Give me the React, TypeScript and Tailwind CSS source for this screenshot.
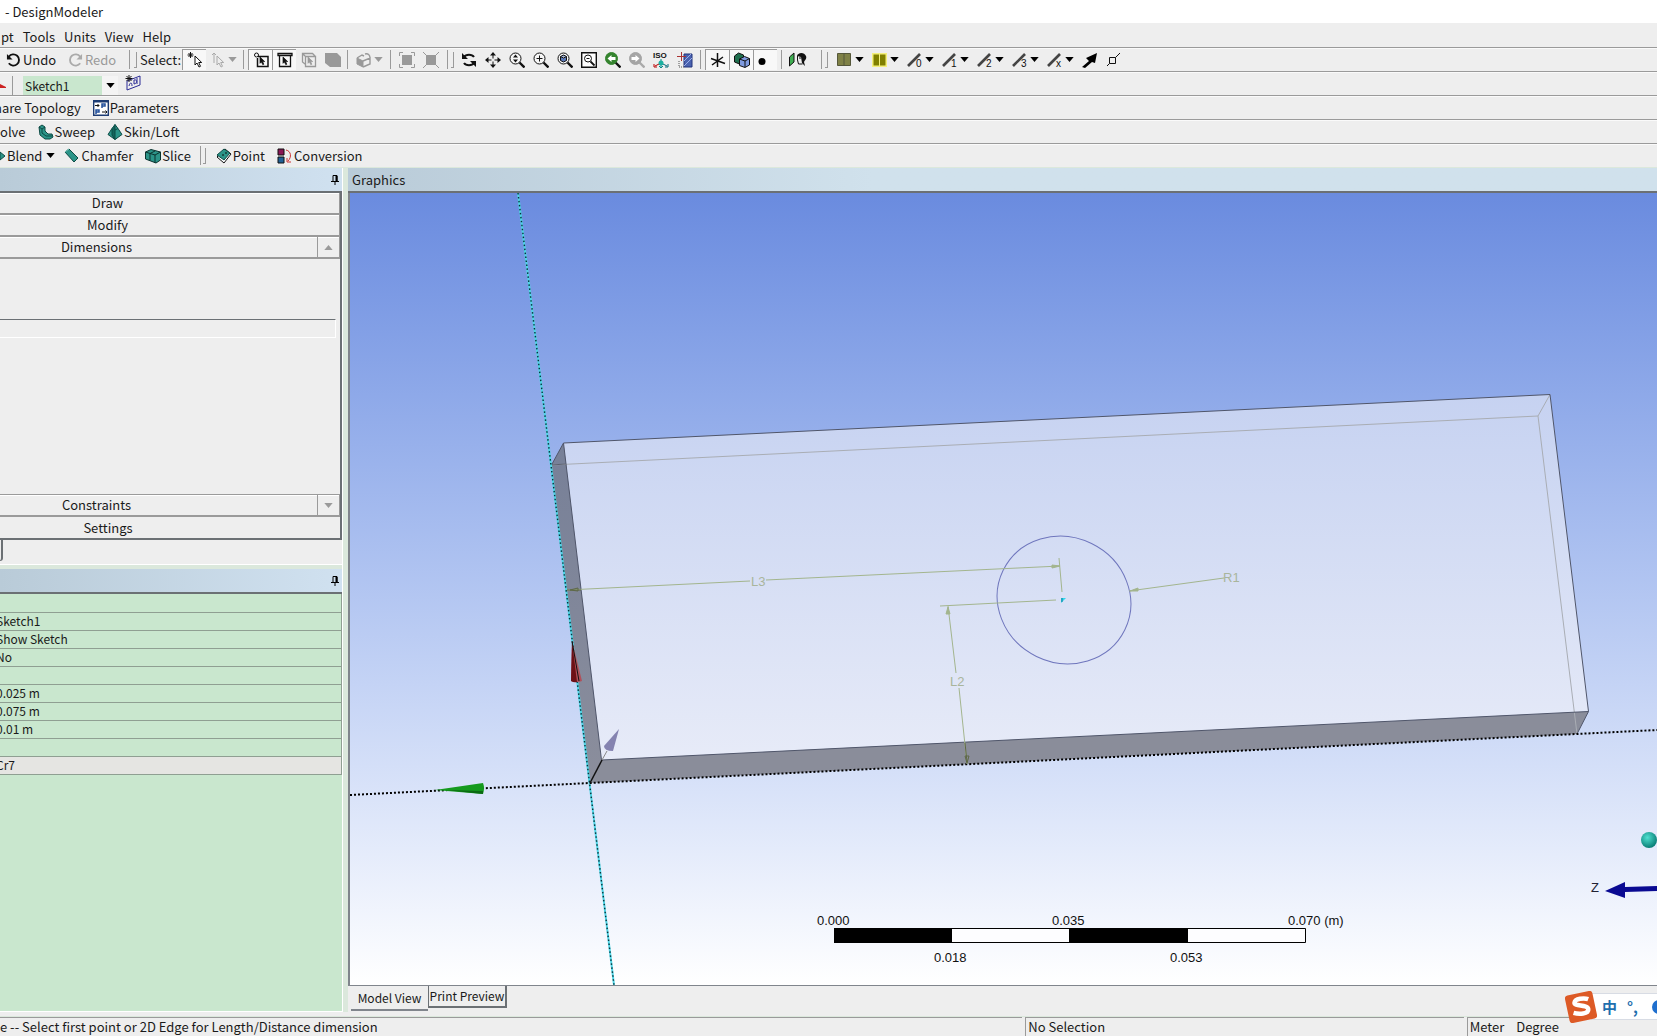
import type { ReactNode } from "react";

const sep = "h-[19px] w-px shrink-0 bg-[#9a9a9a]";

function Caret({ muted = false }: { muted?: boolean }) {
  return (
    <svg viewBox="0 0 10 6" className="h-[5px] w-[9px] shrink-0">
      <path d="M0 0h10L5 6z" fill={muted ? "#9a9a9a" : "#000"} />
    </svg>
  );
}

function Icon({ children, className = "size-4" }: { children: ReactNode; className?: string }) {
  return (
    <svg viewBox="0 0 16 16" fill="none" stroke="#111" className={`shrink-0 ${className}`}>
      {children}
    </svg>
  );
}

function Tool({
  label,
  children,
  pressed = false,
}: {
  label: string;
  children: ReactNode;
  pressed?: boolean;
}) {
  return (
    <button
      type="button"
      aria-label={label}
      className={`flex h-[21px] w-6 shrink-0 items-center justify-center border-l border-t ${
        pressed ? "border-[#9a9a9a] bg-[#f8f8f8]" : "border-transparent"
      }`}
    >
      {children}
    </button>
  );
}

function DropTool({ label, children, muted }: { label: string; children: ReactNode; muted?: boolean }) {
  return (
    <button
      type="button"
      aria-label={label}
      className={`flex h-[21px] shrink-0 items-center gap-[2px] ${muted ? "w-[30px]" : "w-[35px]"}`}
    >
      {children}
      <Caret muted={muted} />
    </button>
  );
}

function Row({ children, low = false }: { children: ReactNode; low?: boolean }) {
  return (
    <div
      className={`flex h-6 shrink-0 overflow-hidden whitespace-nowrap border-t border-[#9a9a9a] shadow-[inset_0_1px_0_#fafafa] ${
        low ? "items-end" : "items-center"
      }`}
    >
      {children}
    </div>
  );
}

function TextTool({ icon, children }: { icon?: ReactNode; children: ReactNode }) {
  return (
    <button type="button" className="flex shrink-0 items-center gap-px">
      {icon}
      {children}
    </button>
  );
}

const cursor = "M0 0v9l2-2 2 4 1.500-.7L3.700 6.500h3z";

function Magnifier({ glyph }: { glyph?: ReactNode }) {
  return (
    <Icon>
      <circle cx="6.500" cy="6.500" r="5.500" fill="#f6f6f6" />
      <path d="M10.500 10.500l5 5" strokeWidth="2.400" />
      {glyph}
    </Icon>
  );
}

function MainToolbar() {
  return (
    <Row>
      <button type="button" className="ml-[6px] flex w-[49px] shrink-0 items-center gap-[2px]">
        <Icon className="size-[15px]">
          <path d="M3 5a6 6 0 1 1 0 7" strokeWidth="2" />
          <path d="M1 2v6h6z" fill="#111" stroke="none" />
        </Icon>
        Undo
      </button>
      <button type="button" disabled className="ml-[13px] flex w-12 shrink-0 items-center gap-[2px] text-[#9a9a9a]">
        <Icon className="size-[15px]">
          <path d="M13 5a6 6 0 1 0 0 7" stroke="#aaa" strokeWidth="2" />
          <path d="M15 2v6H9z" fill="#aaa" stroke="none" />
        </Icon>
        Redo
      </button>
      <div className={`${sep} ml-[13px]`} />
      <div className="ml-1 h-4 w-[3px] border-b border-r border-[#9a9a9a]" />
      <span className="ml-[3px] w-[42px]">Select:</span>
      <Tool label="New selection" pressed>
        <Icon>
          <path d="M3.500 0v6M.500 3h6M1.500 1l4 4M5.500 1l-4 4" />
          <path d={cursor} transform="translate(8 4)" fill="#fff" />
        </Icon>
      </Tool>
      <div className="ml-1">
        <DropTool label="Select mode" muted>
          <Icon>
            <path d="M4 1v10M2 3l2-2 2 2" stroke="#aaa" />
            <path d={cursor} transform="translate(7 4)" stroke="#aaa" />
          </Icon>
        </DropTool>
      </div>
      <div className={`${sep} ml-[3px]`} />
      <div className="ml-1 flex">
        <Tool label="Point filter" pressed>
          <Icon>
            <path d="M5 4.500h10v10H4.500V6" strokeWidth="1.500" />
            <circle cx="3.500" cy="3" r="2" />
            <path d={cursor} transform="translate(7 5) scale(.7)" fill="#111" />
          </Icon>
        </Tool>
        <Tool label="Edge filter" pressed>
          <Icon>
            <path d="M1 1.500h14v2H1zM2.500 4v10.500h11V4" strokeWidth="1.300" />
            <path d={cursor} transform="translate(6 5) scale(.7)" fill="#111" />
          </Icon>
        </Tool>
        <Tool label="Face filter">
          <Icon>
            <path d="M4.500 4.500h10v10h-10zM4 12L1.500 10V1.500h10L14 4M1.500 1.500l3 3" stroke="#999" strokeWidth="1.300" />
            <path d={cursor} transform="translate(7 5) scale(.7)" fill="#999" stroke="#999" />
          </Icon>
        </Tool>
        <Tool label="Body filter">
          <Icon>
            <path d="M0 1h12l4 4v10H5l-5-4z" fill="#999" stroke="none" />
          </Icon>
        </Tool>
      </div>
      <div className={`${sep} ml-[3px]`} />
      <div className="ml-2">
        <DropTool label="Extend selection" muted>
          <Icon>
            <path d="M1 6l6 3v6l-6-3z" fill="#999" stroke="#999" />
            <path d="M7 9l7-3v6l-7 3M1 6l5-3 2 1M9 2c3-1 5 1 5 4" stroke="#999" strokeWidth="1.400" />
          </Icon>
        </DropTool>
      </div>
      <div className={`${sep} ml-[4px]`} />
      <div className="ml-[3px] flex">
        <Tool label="Expand">
          <Icon>
            <path d="M3 3h10v10H3z" fill="#999" stroke="none" />
            <path d="M.500 4V.500H4M12 .500h3.500V4M.500 12v3.500H4M12 15.500h3.500V12" stroke="#999" />
          </Icon>
        </Tool>
        <Tool label="Shrink">
          <Icon>
            <path d="M3 3h10v10H3z" fill="#999" stroke="none" />
            <path d="M0 0l16 16M16 0L0 16" stroke="#999" />
          </Icon>
        </Tool>
      </div>
      <div className={`${sep} ml-[5px]`} />
      <div className="ml-[3px] h-4 w-[3px] border-b border-r border-[#9a9a9a]" />
      <div className="ml-[2px] flex">
        <Tool label="Rotate">
          <Icon>
            <path d="M3 5c2-3 8-3 10 0M13 11c-2 3-8 3-10 0" strokeWidth="2" />
            <path d="M1 1v6h6zM15 15V9H9z" fill="#111" stroke="none" />
          </Icon>
        </Tool>
        <Tool label="Pan">
          <Icon>
            <path d="M8 2v12M2 8h12" strokeDasharray="4.500 3" />
            <path d="M8 0l3 3.500H5zM8 16l3-3.500H5zM0 8l3.500-3v6zM16 8l-3.500-3v6z" fill="#111" stroke="none" />
          </Icon>
        </Tool>
        <Tool label="Zoom">
          <Magnifier glyph={<path d="M6.500 2.500L9 5.500H4zM6.500 10.500L9 7.500H4z" fill="#111" stroke="none" />} />
        </Tool>
        <Tool label="Zoom in">
          <Magnifier glyph={<path d="M6.500 3.500v6M3.500 6.500h6" />} />
        </Tool>
        <Tool label="Zoom to fit">
          <Magnifier
            glyph={<path d="M3.500 4.500l3-1.500 3 1.500v4l-3 1.500-3-1.500zM3.500 4.500l3 1.500 3-1.500" fill="#5a78b8" />}
          />
        </Tool>
        <Tool label="Box zoom">
          <Icon>
            <path d="M.700.700h14.600v14.600H.700z" fill="#fff" strokeWidth="1.400" />
            <circle cx="7" cy="6.500" r="3.500" />
            <path d="M9.500 9.500l4 4" strokeWidth="1.800" />
            <path d="M5.500 6.500h3" />
          </Icon>
        </Tool>
        <Tool label="Previous view">
          <Icon>
            <path d="M10.500 10.500l5 5" strokeWidth="2.400" />
            <circle cx="6.500" cy="6.500" r="6" fill="#35842f" stroke="#35842f" />
            <path d="M2.500 6.500l4-3.500v2h4v3h-4v2z" fill="#fff" stroke="none" />
          </Icon>
        </Tool>
        <Tool label="Next view">
          <Icon>
            <path d="M10.500 10.500l5 5" stroke="#aaa" strokeWidth="2.400" />
            <circle cx="6.500" cy="6.500" r="6" fill="#a5a5a5" stroke="#a5a5a5" />
            <path d="M10.500 6.500l-4-3.500v2h-4v3h4v2z" fill="#fff" stroke="none" />
          </Icon>
        </Tool>
        <Tool label="Isometric view">
          <svg viewBox="0 0 16 17" className="h-[17px] w-4 shrink-0" fill="none">
            <text x="0" y="6" fontSize="8" fill="#111" fontFamily="Liberation Sans, sans-serif" fontWeight="bold">
              ISO
            </text>
            <path d="M8 7v4M8 11v5M6 14l2 2 2-2" stroke="#088" />
            <path d="M8 11l-6 3M1 12v3h3" stroke="#b00" />
            <path d="M8 11l6 3M15 12v3h-3" stroke="#067" />
            <circle cx="8" cy="11" r="2.500" fill="#1bb0a0" />
          </svg>
        </Tool>
        <Tool label="Look at face">
          <Icon>
            <path d="M7 2h8v13H7z" fill="#4a62b0" stroke="#23347c" />
            <path d="M7 9l7-7M7 14l8-8" stroke="#9db0e8" />
            <path d="M4.500 0v9M0 4.500h9" stroke="#a33" />
            <path d="M2 9v6h5" stroke="#555" strokeDasharray="1 1" />
          </Icon>
        </Tool>
      </div>
      <div className={`${sep} ml-1`} />
      <div className="ml-1 flex">
        <Tool label="Display plane" pressed>
          <Icon>
            <path d="M7.500 1v14M1 6.500l14 5M2 13L13 5" strokeWidth="1.500" />
          </Icon>
        </Tool>
        <Tool label="Display model" pressed>
          <Icon>
            <path d="M.500 4l4-3 5 2v7l-4 2-5-2z" fill="#20704f" />
            <path d="M5.500 7l5-2.500 5 2V13l-4.500 2.500-5.500-2z" fill="#7f9be0" />
            <path d="M5.500 7l5.500 2 4.500-2.500M11 9v6" />
          </Icon>
        </Tool>
        <Tool label="Display points" pressed>
          <Icon>
            <circle cx="4" cy="9.500" r="3.500" fill="#000" stroke="none" />
          </Icon>
        </Tool>
      </div>
      <div className={`${sep} ml-1`} />
      <button type="button" aria-label="Look at" className="ml-[7px] flex h-[21px] shrink-0 items-center">
        <svg viewBox="0 0 18 16" className="h-4 w-[18px]" fill="none" stroke="#111">
          <path d="M.500 5L5 1v9L.500 14z" fill="#3fae52" />
          <path d="M8 4c0-3 7-5 9 0 1 3-1 4-2 6l1 4-3-3-1-6z" fill="#111" stroke="none" />
          <path d="M8.500 4v4l1 4h4M10 6h2" />
        </svg>
      </button>
      <div className={`${sep} ml-[14px]`} />
      <div className="ml-[3px] h-4 w-[3px] border-b border-r border-[#9a9a9a]" />
      <div className="ml-[9px] flex">
        <DropTool label="Face color">
          <Icon>
            <path d="M.500 1.500h13v12H.500zM7 1.500v12" fill="#7f8146" stroke="#55573a" />
          </Icon>
        </DropTool>
        <DropTool label="Edge color">
          <Icon>
            <path d="M0 1h15v14H0z" fill="#f4f07c" stroke="none" />
            <path d="M1.500 2.500H7v11H1.500zM8 2.500h5.500v11H8z" fill="#808000" stroke="none" />
          </Icon>
        </DropTool>
        {["0", "1", "2", "3", "x"].map((n) => (
          <DropTool key={n} label={`Edge style ${n}`}>
            <Icon>
              <path d="M1 14L13 2" stroke="#444" strokeWidth="2.600" />
              <text x="9" y="15" fontSize="10" fill="#111" stroke="none" fontFamily="Liberation Sans, sans-serif">
                {n}
              </text>
            </Icon>
          </DropTool>
        ))}
        <div className="-ml-[5px] flex">
          <Tool label="Edge direction">
            <Icon>
              <path d="M15 1l-2 10-3-1-7 6-3-1 7-6-3-3z" fill="#000" stroke="none" />
            </Icon>
          </Tool>
          <Tool label="Vertices">
            <Icon>
              <path d="M3.500 5.500h6v6h-6zM9.500 5.500L14 1M3.500 11.500L1 14" />
            </Icon>
          </Tool>
        </div>
      </div>
    </Row>
  );
}

function Toolbars() {
  return (
    <>
      <MainToolbar />
      <Row low>
        <svg viewBox="0 0 6 4" className="mb-[7px] h-1 w-[6px] shrink-0">
          <path d="M0 0l6 3v1H0z" fill="#c22" />
        </svg>
        <div className={`${sep} ml-[6px]`} />
        <select
          aria-label="Active sketch"
          className="ml-[10px] h-[19px] w-[79px] appearance-none bg-[#c9e7ce] pl-[2px] text-xs leading-[19px]"
        >
          <option>Sketch1</option>
        </select>
        <div className="flex h-[19px] w-4 items-center justify-center bg-[#f4f4f4]">
          <Caret />
        </div>
        <button type="button" aria-label="New sketch" className="mb-1 ml-[7px] flex items-center">
          <Icon>
            <path d="M2 6l13-5v9L2 15z" stroke="#2a2a96" />
            <path d="M4 11c1-4 3-4 3 0M9 5c4-1 3 4 0 4V5M12 3v6" stroke="#2a2a96" />
            <path d="M4 0v7M.500 3.500h7M1.500 1l5 5M6.500 1l-5 5" />
          </Icon>
        </button>
      </Row>
      <Row>
        <div className="-ml-[6px] flex gap-[12px]">
          <TextTool>hare Topology</TextTool>
          <TextTool
            icon={
              <Icon>
                <path d="M.700.700h14.600v14.600H.700z" fill="#fff" stroke="#1d3c74" strokeWidth="1.400" />
                <path d="M1 1.500h14" stroke="#1d3c74" strokeWidth="2" />
                <path d="M2 5.500h4M4.500 4L6 5.500 4.500 7M9 12h5M12.500 10.500L14 12l-1.500 1.500" />
                <path d="M9 8V4h3v2H9M3 14v-4h3v2H3" stroke="#23509c" strokeWidth="1.500" />
              </Icon>
            }
          >
            Parameters
          </TextTool>
        </div>
      </Row>
      <Row>
        <div className="flex gap-[12px]">
          <TextTool>olve</TextTool>
          <TextTool
            icon={
              <Icon>
                <path d="M1 3l3-2 3 2v4l3 3 4 0 1 3-3 2H7l-5-4z" fill="#2b9488" stroke="#0d4a44" />
                <path d="M1 3l3 2 3-2M4 5v4l4 3h6" stroke="#0d4a44" />
              </Icon>
            }
          >
            Sweep
          </TextTool>
          <TextTool
            icon={
              <Icon>
                <path d="M8 .500l3 4 4 6-7 5-7-5 4-6z" fill="#2b9488" stroke="#0d4a44" />
                <path d="M8 .500v15L5 11V4.500M8 6l3-1.500" fill="#13655c" stroke="#0d4a44" />
              </Icon>
            }
          >
            Skin/Loft
          </TextTool>
        </div>
      </Row>
      <Row>
        <div className="flex items-center">
          <svg viewBox="0 0 5 12" className="h-3 w-[5px]">
            <path d="M0 2l5 4-5 4z" fill="#2b9488" stroke="#0d4a44" />
          </svg>
          <button type="button" className="ml-[2px] flex items-center gap-1">
            Blend <Caret />
          </button>
          <div className="ml-[9px] flex gap-[12px]">
            <TextTool
              icon={
                <Icon>
                  <path d="M1 4l4-3 9 9-4 4z" fill="#2b9488" stroke="#0d4a44" />
                  <path d="M1 4l4-3" stroke="#7fd0c4" />
                </Icon>
              }
            >
              Chamfer
            </TextTool>
            <TextTool
              icon={
                <Icon>
                  <path d="M.500 4L6 1.500 15.500 4v8L11 15 .500 11z" fill="#2b9488" stroke="#0b332f" />
                  <path d="M.500 4L10 7l5.500-3M10 7v8M5 5.500L10 3M5 5.500v7" stroke="#0b332f" />
                </Icon>
              }
            >
              Slice
            </TextTool>
          </div>
          <div className={`${sep} ml-[9px]`} />
          <div className="ml-[2px] h-4 w-[3px] border-b border-r border-[#9a9a9a]" />
          <div className="ml-[10px] flex gap-[12px]">
            <TextTool
              icon={
                <Icon>
                  <path d="M1 9l8-8 6 5-7 9z" fill="#fff" />
                  <path d="M1 7l7-6 6 4-6 7z" fill="#2b9488" stroke="#0d4a44" />
                  <path d="M6 7h2M9 5h2" />
                </Icon>
              }
            >
              Point
            </TextTool>
            <TextTool
              icon={
                <Icon>
                  <path d="M1 1h6v6H1z" fill="#8a1554" />
                  <path d="M1 9h6v6H1z" fill="#1f5f96" />
                  <path d="M9 2c5 1 6 7 2 11M10 10v4h4" stroke="#c33" />
                </Icon>
              }
            >
              Conversion
            </TextTool>
          </div>
        </div>
      </Row>
    </>
  );
}

function PanelHeader() {
  return (
    <div className="flex h-[25px] shrink-0 items-center justify-end border-b-2 border-[#6b7074] bg-gradient-to-r from-[#b9cbd8] to-[#d0e1f0] pr-[3px]">
      <button type="button" aria-label="Pin panel">
        <svg viewBox="0 0 8 10" className="h-[10px] w-2" fill="none" stroke="#000">
          <path d="M2 6V.500h4V6M0 6.500h8M4 7v3" />
          <path d="M5.500 1v5" strokeWidth="2" />
        </svg>
      </button>
    </div>
  );
}

const bar =
  "flex h-[22px] items-center justify-center border-b-2 border-r border-[#9a9a9a] bg-[#eee] shadow-[inset_0_1px_0_#fff]";

function Toolbox() {
  return (
    <section className="flex h-[397px] shrink-0 flex-col border-b border-white bg-[#eee]">
      <PanelHeader />
      <div className="-ml-[124px] flex flex-1 flex-col border-b-2 border-r-2 border-[#6b7074]">
        <button type="button" className={bar}>Draw</button>
        <button type="button" className={bar}>Modify</button>
        <div className="flex">
          <button type="button" className={`${bar} flex-1`}>Dimensions</button>
          <button type="button" aria-label="Scroll up" className={`${bar} w-[22px]`}>
            <span className="rotate-180"><Caret muted /></span>
          </button>
        </div>
        <div className="flex-1 pt-[60px]">
          <div className="mr-1 h-[19px] border-b border-r border-t border-b-white border-r-white border-t-[#6b7074]" />
        </div>
        <div className="flex border-t border-[#9a9a9a]">
          <button type="button" className={`${bar} flex-1`}>Constraints</button>
          <button type="button" aria-label="Scroll down" className={`${bar} w-[22px]`}>
            <Caret muted />
          </button>
        </div>
        <button type="button" className="flex h-[21px] items-center justify-center">Settings</button>
      </div>
      <div className="h-6 shrink-0">
        <div className="h-[21px] w-[3px] rounded-br-sm border-b border-r-2 border-[#6b7074]" />
      </div>
    </section>
  );
}

const details = ["", "Sketch1", "Show Sketch", "No", "", "0.025 m", "0.075 m", "0.01 m", "", "Cr7"];

function Details() {
  return (
    <section className="mt-1 flex flex-1 flex-col border-b border-white bg-[#c9e7ce]">
      <PanelHeader />
      <table className="w-full table-fixed border-collapse text-xs">
        <tbody>
          {details.map((value, i) => (
            <tr key={i} className={i === details.length - 1 ? "bg-[#e5e5e2]" : ""}>
              <td className="h-[18px] border-b border-r border-[#8f9f92] p-0 leading-4">
                <span className="-ml-1 block">{value}</span>
              </td>
            </tr>
          ))}
        </tbody>
      </table>
    </section>
  );
}

function Viewport() {
  return (
    <div className="relative min-h-0 flex-1 overflow-hidden border-b border-l-2 border-[#80858c] bg-gradient-to-b from-[#6a8bdf] to-white">
      <svg
        viewBox="350 193 1307 792"
        preserveAspectRatio="xMidYMid slice"
        className="absolute inset-0 size-full"
        fill="none"
        fontFamily="Liberation Sans, Arial, sans-serif"
      >
        <defs>
          <linearGradient id="side" x1="0" y1="0" x2="0" y2="1">
            <stop offset="0" stopColor="#778098" />
            <stop offset="1" stopColor="#8b8e9c" />
          </linearGradient>
          <linearGradient id="face" x1="0" y1="0" x2="0" y2="1">
            <stop offset="0" stopColor="#c6d2f1" />
            <stop offset="1" stopColor="#e7ebf8" />
          </linearGradient>
          <radialGradient id="ball" cx=".4" cy=".35" r=".7">
            <stop offset="0" stopColor="#4fe0d0" />
            <stop offset="1" stopColor="#04776f" />
          </radialGradient>
        </defs>

        {/* solid body */}
        <path d="M563.500 443L1550 394.500 1588.500 711.500 601.500 760z" fill="url(#face)" />
        <path d="M563.500 443L551.500 465 590 783 601.500 760z" fill="url(#side)" />
        <path d="M601.500 760L590 783 1577 734 1588.500 711.500z" fill="#8a8d9a" />
        <path d="M551.500 465L1538 416 1577 734" stroke="#a9adb4" />
        <path d="M1538 416L1550 394.500" stroke="#a9adb4" />
        <path d="M551.500 465l14-1" stroke="#5a6070" />
        <path
          d="M563.500 443L1550 394.500 1588.500 711.500 601.500 760zM551.500 465L563.500 443M1588.500 711.500L1577 734"
          stroke="#50566a"
        />

        {/* axes */}
        <path d="M518 193L614 985" stroke="#4fd5e6" strokeWidth="2" />
        <path d="M518 193L614 985" stroke="#06343c" strokeWidth="1.400" strokeDasharray="1.500 2.500" />
        <path d="M350 795L590 783 1657 730" stroke="#000" strokeWidth="2" strokeDasharray="2 2" />
        <path d="M590 783l12-23" stroke="#111" strokeWidth="1.500" />
        <path d="M602 760l5-9" stroke="#888" />
        <path d="M435 790l48-7q2 5 0 11z" fill="#159a1e" />
        <path d="M445 790l38 1v3z" fill="#0b6a12" />
        <path d="M572 641l-1 40q6 2 11 0z" fill="#b0505a" />
        <path d="M572 641l-1 40q3 2 6 1z" fill="#6d1016" />
        <path d="M572 641l7 40" stroke="#111" />
        <path d="M619 729l-15 17q0 5 9 5z" fill="#8583b0" />

        {/* circle and its dimensions */}
        <ellipse rx="67.700" ry="62.800" transform="translate(1064 600) rotate(26)" stroke="#6f76bd" />
        <g stroke="#a3b58e">
          <path d="M567 590L750 581M766 580L1060 566M1059 558L1062 592" />
          <path d="M940 606L1056 600M948 606L956 673M959 688L967 764" />
          <path d="M1129 591L1224 578" />
          <path d="M948 607l-2 7h4zM1060 566l-8-1v3zM1130 591l8-3v3z" fill="#a3b58e" />
        </g>
        <path d="M965 743L967 762M965 756l2 7 2-7zM567 590l14 0M570 590l8-2v3z" stroke="#5e6846" />
        <g fill="#a9b59c" fontSize="13">
          <text x="751" y="586">L3</text>
          <text x="950" y="686">L2</text>
          <text x="1223" y="582">R1</text>
        </g>
        <path d="M1061 598h5l-5 5z" fill="#2fd6ee" />
        <path d="M1062 598v4" stroke="#157a96" />

        {/* ruler */}
        <path d="M834.500 928.500h471v14h-471z" fill="#fdfdff" stroke="#000" />
        <path d="M834 928h118v15H834zM1069 928h119v15h-119z" fill="#000" />
        <g fill="#111" fontSize="13">
          <text x="817" y="925">0.000</text>
          <text x="1052" y="925">0.035</text>
          <text x="1288" y="925">0.070 (m)</text>
          <text x="934" y="962">0.018</text>
          <text x="1170" y="962">0.053</text>
        </g>

        {/* triad */}
        <circle cx="1649" cy="840" r="8" fill="url(#ball)" />
        <path d="M1605 891l20-9v5l32-1v5l-32 1v6z" fill="#0a0a92" />
        <text x="1591" y="892" fontSize="13" fill="#223">Z</text>
      </svg>
    </div>
  );
}

function ImeBar() {
  return (
    <div className="absolute bottom-4 right-0 flex h-[27px] items-center border-y border-[#d8dce4] bg-white text-[#1f6fae]">
      <svg viewBox="0 0 32 32" className="-ml-[26px] size-8">
        <rect x="2" y="2" width="28" height="28" rx="3" fill="#dd5a26" transform="rotate(-12 16 16)" />
        <path
          d="M24 9c-4-2-13-2-14 2s13 3 13 8-10 4-15 2"
          fill="none"
          stroke="#fff"
          strokeWidth="4.500"
          transform="rotate(-6 16 16)"
        />
      </svg>
      <span className="ml-[5px] text-[15px] font-bold">中</span>
      <span className="ml-[10px] text-[15px] font-bold">°,</span>
      <svg viewBox="0 0 5 14" className="ml-[14px] h-[14px] w-[5px]">
        <circle cx="7" cy="7" r="7" fill="#1f6fce" />
      </svg>
    </div>
  );
}

export default function App() {
  return (
    <div className="relative flex h-screen min-h-[800px] flex-col overflow-hidden bg-[#eee] font-['Noto_Sans_CJK_SC',sans-serif] text-[13px] leading-5 text-[#1a1a1a]">
      <header className="flex h-[23px] shrink-0 items-center bg-white pl-[5px]">- DesignModeler</header>
      <nav className="flex h-6 shrink-0 items-center gap-[9px] pl-px pt-[3px]">
        {["pt", "Tools", "Units", "View", "Help"].map((item) => (
          <button key={item} type="button">{item}</button>
        ))}
      </nav>
      <Toolbars />

      <main className="flex min-h-0 flex-1 bg-[#dbe8dc] pt-px">
        <aside className="flex w-[343px] shrink-0 flex-col overflow-hidden border-r border-white">
          <Toolbox />
          <Details />
        </aside>
        <section className="ml-[5px] flex min-w-0 flex-1 flex-col bg-[#eee]">
          <h2 className="flex h-[25px] shrink-0 items-center border-b-2 border-[#6b7074] bg-gradient-to-r from-[#b9cbd8] to-[#d0e1ec] to-40% pl-1">
            Graphics
          </h2>
          <Viewport />
          <div className="flex h-[26px] shrink-0 items-start pl-[3px] text-xs">
            <button type="button" className="h-[25px] w-[77px] border-b-2 border-[#80858c]">Model View</button>
            <button type="button" className="h-[22px] w-[79px] border-b-2 border-l border-r-2 border-[#6b7074]">
              Print Preview
            </button>
          </div>
        </section>
      </main>

      <footer className="mt-1 flex h-5 shrink-0 gap-[3px] border-t border-[#dbe8dc]">
        <div className="flex flex-[1026] items-center border-t border-[#9a9a9a]">
          e -- Select first point or 2D Edge for Length/Distance dimension
        </div>
        <div className="flex flex-[437] items-center border-l border-t border-[#9a9a9a] pl-[2px]">No Selection</div>
        <div className="flex flex-[188] items-center gap-3 border-l border-t border-[#9a9a9a] pl-[2px]">
          <span>Meter</span>
          <span>Degree</span>
        </div>
      </footer>
      <ImeBar />
    </div>
  );
}
